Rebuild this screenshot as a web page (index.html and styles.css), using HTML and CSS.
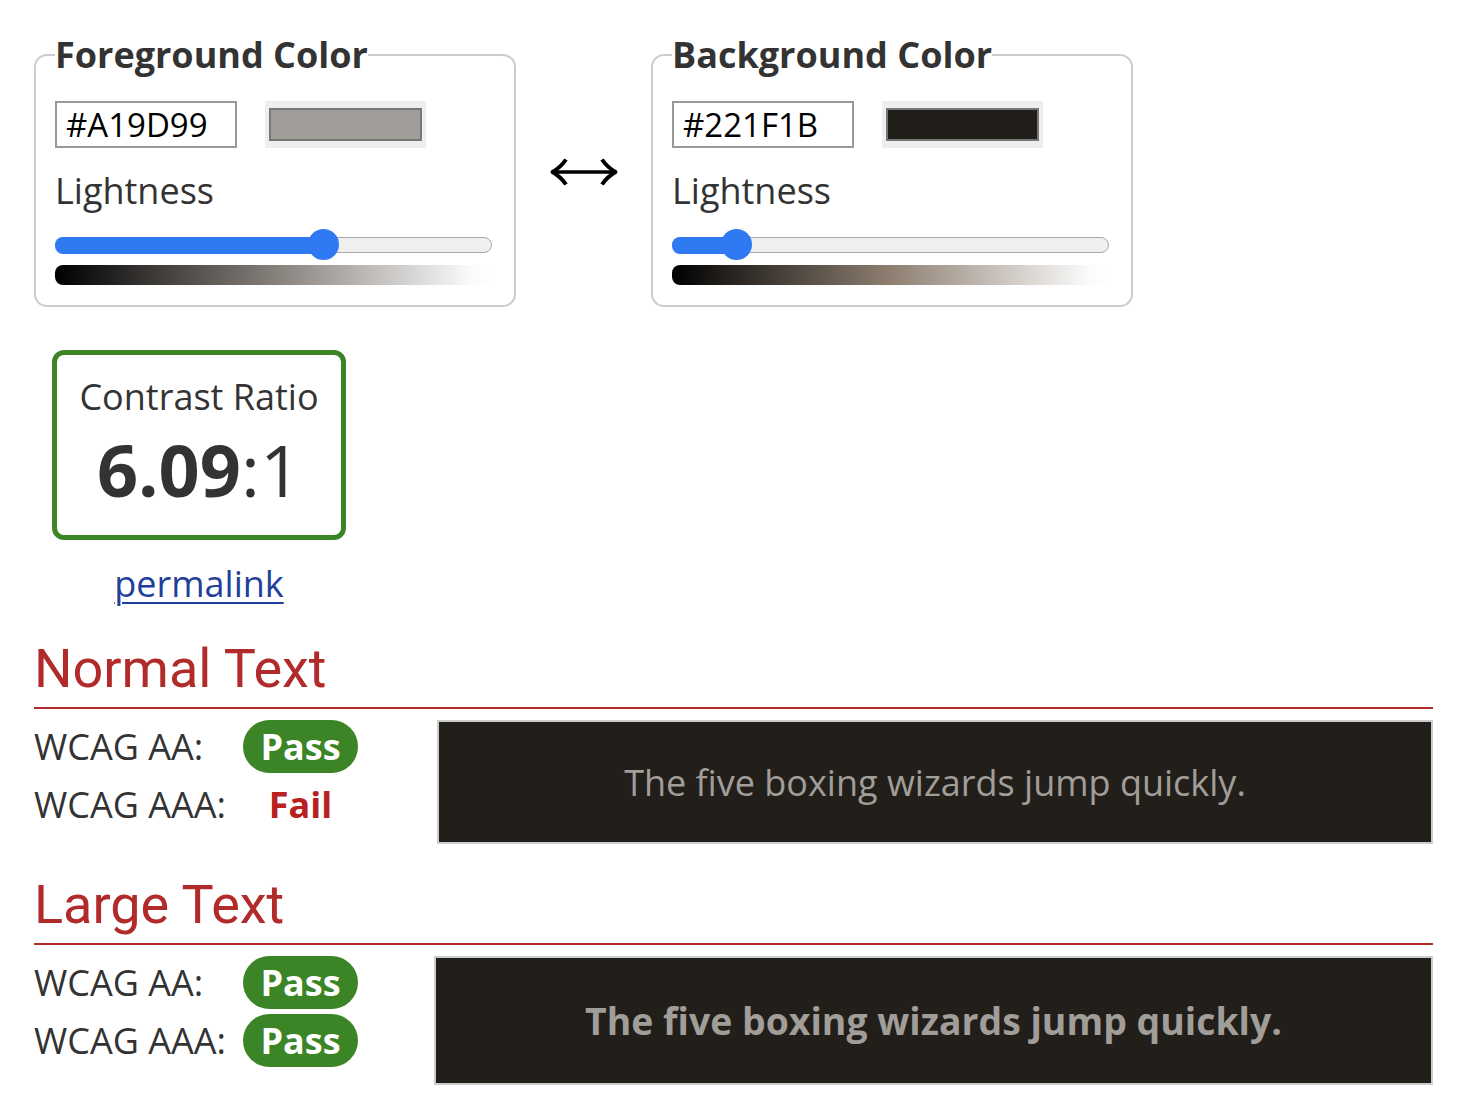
FILE: index.html
```html
<!DOCTYPE html>
<html lang="en">
<head>
<meta charset="utf-8">
<title>Contrast Checker</title>
<link rel="stylesheet" href="styles.css">
</head>
<body>
<main class="page">
  <div class="colors">
    <fieldset class="color-set">
      <legend class="color-legend">Foreground Color</legend>
      <div class="input-row">
        <input class="hex" type="text" value="#A19D99" aria-label="Foreground hex">
        <span class="swatch-wrap"><span class="swatch swatch-fg"></span></span>
      </div>
      <div class="label">Lightness</div>
      <div class="track">
        <div class="fill" style="width:268px"></div>
        <div class="thumb" style="left:252px"></div>
      </div>
      <div class="grad grad-fg"></div>
    </fieldset>

    <div class="swap" aria-label="swap colors">
      <svg width="70" height="32" viewBox="0 0 70 32" aria-hidden="true">
        <path d="M5 16 H65" stroke="#000" stroke-width="3.5" fill="none"/>
        <path d="M17 3.5 Q12 11 3.5 16 Q12 21 17 28.5" stroke="#000" stroke-width="4" fill="none" stroke-linejoin="round"/>
        <path d="M53 3.5 Q58 11 66.5 16 Q58 21 53 28.5" stroke="#000" stroke-width="4" fill="none" stroke-linejoin="round"/>
      </svg>
    </div>

    <fieldset class="color-set">
      <legend class="color-legend">Background Color</legend>
      <div class="input-row">
        <input class="hex" type="text" value="#221F1B" aria-label="Background hex">
        <span class="swatch-wrap"><span class="swatch swatch-bg"></span></span>
      </div>
      <div class="label">Lightness</div>
      <div class="track">
        <div class="fill" style="width:64px"></div>
        <div class="thumb" style="left:48px"></div>
      </div>
      <div class="grad grad-bg"></div>
    </fieldset>
  </div>

  <div class="ratio-wrap">
    <div class="ratio-box">
      <div class="ratio-title">Contrast Ratio</div>
      <div class="ratio-value"><b>6.09</b>:1</div>
    </div>
    <a class="permalink" href="#">permalink</a>
  </div>

  <section class="result">
    <h2 class="result-title">Normal Text</h2>
    <div class="result-body">
      <div class="checks">
        <span class="check-label">WCAG AA:</span><span class="badge pass">Pass</span>
        <span class="check-label">WCAG AAA:</span><span class="badge fail">Fail</span>
      </div>
      <div class="sample sample-normal">The five boxing wizards jump quickly.</div>
    </div>
  </section>

  <section class="result">
    <h2 class="result-title">Large Text</h2>
    <div class="result-body">
      <div class="checks checks-large">
        <span class="check-label">WCAG AA:</span><span class="badge pass">Pass</span>
        <span class="check-label">WCAG AAA:</span><span class="badge pass">Pass</span>
      </div>
      <div class="sample sample-large">The five boxing wizards jump quickly.</div>
    </div>
  </section>
</main>
</body>
</html>
```

FILE: styles.css
```css
* { box-sizing: border-box; }
html, body { margin: 0; padding: 0; background: #fff; }
body {
  font-family: "Open Sans", "DejaVu Sans", sans-serif;
  color: #333;
  font-size: 36px;
}
.page {
  width: 1399px;
  margin-left: 34px;
  padding-top: 34px;
}
.colors {
  display: flex;
  align-items: flex-start;
}
.color-set {
  width: 482px;
  height: 273px;
  margin: 0;
  border: 2px solid #cdcdcd;
  border-radius: 13px;
  padding: 0 20px 0 19px;
  min-width: 0;
}
.color-legend {
  font-size: 36px;
  font-weight: 700;
  line-height: 42px;
  padding: 0;
  color: #333;
}
.input-row {
  display: flex;
  margin-top: 25px;
  gap: 28px;
}
.hex {
  width: 182px;
  height: 47px;
  border: 2px solid #999;
  font-family: "Open Sans", sans-serif;
  font-size: 33px;
  color: #000;
  padding: 0 9px;
  margin: 0;
  border-radius: 0;
  outline: none;
}
.swatch-wrap {
  width: 161px;
  height: 47px;
  background: #eee;
  display: flex;
  align-items: center;
  justify-content: center;
}
.swatch {
  width: 153px;
  height: 33px;
  border: 2px solid #777;
}
.swatch-fg { background: #A19D99; }
.swatch-bg { background: #221F1B; }
.label {
  margin-top: 19px;
  line-height: 48px;
  font-size: 36px;
}
.track {
  position: relative;
  width: 437px;
  height: 16px;
  margin-top: 22px;
  border: 1.5px solid #aaa;
  border-radius: 8px;
  background: #efefef;
}
.fill {
  position: absolute;
  left: -1.5px;
  top: -1.5px;
  bottom: -1.5px;
  background: #2f7af2;
  border-radius: 8px 0 0 8px;
}
.thumb {
  position: absolute;
  top: -9px;
  width: 31px;
  height: 31px;
  border-radius: 50%;
  background: #2f7af2;
}
.grad {
  width: 437px;
  height: 20px;
  margin-top: 12px;
  border-radius: 8px 0 0 8px;
}
.grad-fg { background: linear-gradient(to right, #000, #857f7a 50%, #fafafa 95%, #fff); }
.grad-bg { background: linear-gradient(to right, #000, #8e7f71 50%, #fafafa 95%, #fff); }
.swap {
  width: 135px;
  display: flex;
  justify-content: center;
  padding-top: 122px;
}
.swap svg { display: block; }

.ratio-wrap {
  width: 294px;
  margin-left: 18px;
  margin-top: 43px;
  text-align: center;
}
.ratio-box {
  height: 190px;
  border: 5px solid #3b8526;
  border-radius: 12px;
  padding-top: 18px;
}
.ratio-title {
  font-size: 36px;
  line-height: 48px;
}
.ratio-value {
  font-size: 72px;
  line-height: 96px;
  margin-top: 0;
}
.ratio-value b { font-weight: 700; }
.permalink {
  display: inline-block;
  margin-top: 20px;
  font-size: 36px;
  line-height: 48px;
  color: #22409a;
  text-decoration: underline;
  text-decoration-thickness: 2px;
  text-underline-offset: 5px;
}

.result { margin-top: 29px; }
.result + .result { margin-top: 29px; }
.result-title {
  margin: 0;
  font-family: Roboto, "Liberation Sans", sans-serif;
  font-weight: 400;
  font-size: 54px;
  line-height: 64px;
  color: #b22b2b;
  border-bottom: 2px solid #b22b2b;
  padding-bottom: 6px;
}
.result-body {
  display: flex;
  align-items: flex-start;
  margin-top: 11px;
}
.checks {
  flex: 0 0 403px;
  display: grid;
  grid-template-columns: 209px 115px;
  grid-auto-rows: 53px;
  row-gap: 5px;
  align-items: center;
}
.checks-large { flex-basis: 400px; }
.check-label { font-size: 36px; color: #333; }
.badge {
  height: 53px;
  border-radius: 27px;
  display: flex;
  align-items: center;
  justify-content: center;
  font-weight: 700;
  font-size: 36px;
}
.pass { background: #3b8526; color: #fff; }
.fail { color: #b8211e; }
.sample {
  flex: 1;
  border: 2px solid #ccc;
  background: #221F1B;
  color: #A19D99;
  display: flex;
  align-items: center;
  justify-content: center;
}
.sample-normal { height: 124px; font-size: 36px; }
.sample-large { height: 129px; font-size: 37.4px; font-weight: 700; }
```
